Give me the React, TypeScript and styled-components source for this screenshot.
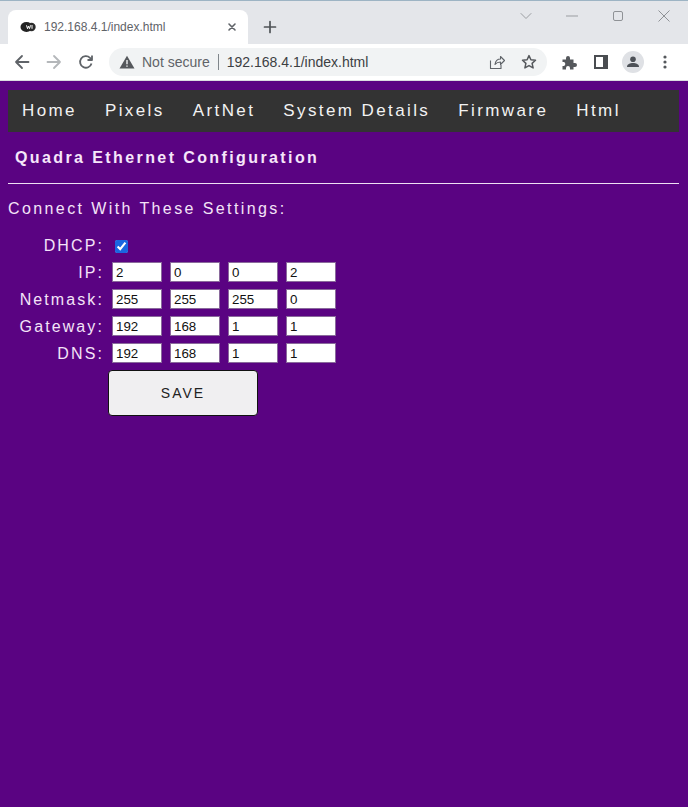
import React from "react";
import styled, { createGlobalStyle } from "styled-components";

const Global = createGlobalStyle`
  html, body { margin: 0; padding: 0; height: 100%; background: #5a0382; }
  #root { height: 100%; }
  * { box-sizing: border-box; }
`;

const Page = styled.div`
  width: 688px; height: 807px; display: flex; flex-direction: column; overflow: hidden;
  background: #5a0382; font-family: "Liberation Sans", Arial, sans-serif;
`;
const Chrome = styled.div`
  height: 81px; flex: none; display: flex; flex-direction: column;
  border-top: 1px solid #9db4c4; background: #e4e6ea;
  font-family: "Open Sans", "Liberation Sans", sans-serif;
`;
const TabStrip = styled.div`
  height: 43px; flex: none; display: flex; align-items: flex-end; padding-left: 8px;
`;
const Tab = styled.div`
  width: 240px; height: 34px; background: #fff; border-radius: 8px 8px 0 0;
  display: flex; align-items: center; padding: 0 11px 0 12px; gap: 8px;
  color: #5f6368; font-size: 12px; font-family: "Liberation Sans", sans-serif;
`;
const TabTitle = styled.span` flex: 1; letter-spacing: 0; `;
const NewTab = styled.div`
  width: 28px; height: 34px; margin-left: 8px; display: flex; align-items: center; justify-content: center;
`;
const WindowControls = styled.div`
  margin-left: auto; height: 43px; display: flex; align-items: flex-start; padding-top: 6px; padding-right: 1px;
`;
const WinBtn = styled.div<{ $w: number }>`
  width: ${(p) => p.$w}px; height: 18px; display: flex; align-items: center; justify-content: center;
`;
const Toolbar = styled.div`
  height: 37px; flex: none; background: #fff; display: flex; align-items: center; padding-left: 6px;
  border-bottom: 1px solid #dadce0;
`;
const NavIcon = styled.div`
  width: 32px; height: 28px; display: flex; align-items: center; justify-content: center;
`;
const Omnibox = styled.div`
  margin-left: 7px; width: 438px; height: 28px; border-radius: 14px; background: #f1f3f4;
  display: flex; align-items: center; padding-left: 10px; padding-right: 2px;
  font-family: "Liberation Sans", sans-serif; font-size: 14px;
`;
const NotSecure = styled.span` color: #5f6368; margin-left: 7px; `;
const Divider = styled.span` width: 1px; height: 16px; background: #80868b; margin: 0 8px 0 8px; `;
const Url = styled.span` color: #3c4043; flex: 1; `;
const OmniIcon = styled.div`
  width: 32px; height: 24px; display: flex; align-items: center; justify-content: center;
`;
const ToolIcons = styled.div` display: flex; align-items: center; margin-left: 6px; `;
const ToolIcon = styled.div`
  width: 32px; height: 28px; display: flex; align-items: center; justify-content: center;
`;
const Content = styled.main`
  flex: 1; padding: 9px 9px 0 8px; color: #f4e3f8;
  letter-spacing: 2.4px;
`;
const Nav = styled.nav`
  height: 42px; background: #333; display: flex; align-items: center; padding-left: 14px; gap: 28px;
`;
const NavLink = styled.span`
  color: #f2f2f2; font-size: 17px;
`;
const Title = styled.h1`
  margin: 17px 0 0 7px; font-size: 16px; line-height: 18px; font-weight: 700; color: #f6e6fa;
`;
const Rule = styled.hr`
  margin: 16px 0 0; border: 0; height: 1px; background: #efe0f4;
`;
const Lead = styled.p`
  margin: 16px 0 0; font-size: 16px; line-height: 18px; font-weight: 400;
`;
const Form = styled.form`
  margin-top: 17px; display: grid; grid-template-columns: 96px auto; row-gap: 5px; justify-content: start; column-gap: 8px;
`;
const Label = styled.label`
  font-size: 16px; line-height: 22px; text-align: right; white-space: nowrap; letter-spacing: 2.1px;
  justify-self: end;
`;
const Cells = styled.div`
  display: flex; gap: 8px; height: 22px; align-items: flex-start;
`;
const Check = styled.input`
  margin: 0 0 0 3px; width: 13px; height: 13px; accent-color: #1a66e0; align-self: center;
`;
const Octet = styled.input`
  width: 50px; height: 20px; border: 1px solid #8a6a9c; border-radius: 0; padding: 0 3px; margin: 0;
  background: #fff; color: #111; font: 13.33px "Liberation Sans", Arial, sans-serif; outline: none;
`;
const Save = styled.button`
  grid-column: 2; margin: 0 0 0 -4px; width: 150px; height: 46px; background: #f0eff1; border: 1px solid #111;
  border-radius: 4px; color: #222; font: 14px "Liberation Sans", Arial, sans-serif; letter-spacing: 2px;
`;

const stroke = { fill: "none", strokeLinecap: "round", strokeLinejoin: "round" } as const;

const rows = [
  { label: "IP:", values: ["2", "0", "0", "2"] },
  { label: "Netmask:", values: ["255", "255", "255", "0"] },
  { label: "Gateway:", values: ["192", "168", "1", "1"] },
  { label: "DNS:", values: ["192", "168", "1", "1"] },
];
const links = ["Home", "Pixels", "ArtNet", "System Details", "Firmware", "Html"];

export default function App() {
  return (
    <Page>
      <Global />
      <Chrome>
        <TabStrip>
          <Tab>
            <svg width="16" height="12" viewBox="0 0 16 12">
              <ellipse cx="6.5" cy="6" rx="6" ry="5" fill="#222" />
              <circle cx="11.5" cy="6" r="4.2" fill="#2b2b2b" />
              <path d="M6.5 4.3l1 3.4 1-2.6 1 2.6 1-3.4M12 4v3.8" stroke="#fff" strokeWidth="1" fill="none" />
            </svg>
            <TabTitle>192.168.4.1/index.html</TabTitle>
            <svg width="10" height="10" viewBox="0 0 10 10">
              <path d="M2 2l6 6M8 2l-6 6" stroke="#5f6368" strokeWidth="1.6" {...stroke} />
            </svg>
          </Tab>
          <NewTab>
            <svg width="14" height="14" viewBox="0 0 14 14">
              <path d="M7 1.5v11M1.5 7h11" stroke="#4f5357" strokeWidth="1.7" {...stroke} />
            </svg>
          </NewTab>
          <WindowControls>
            <WinBtn $w={46}>
              <svg width="12" height="8" viewBox="0 0 12 8"><path d="M1 1.5l5 5 5-5" stroke="#9a9da1" {...stroke} /></svg>
            </WinBtn>
            <WinBtn $w={46}>
              <svg width="12" height="2" viewBox="0 0 12 2"><path d="M0 1h12" stroke="#9a9da1" /></svg>
            </WinBtn>
            <WinBtn $w={46}>
              <svg width="10" height="10" viewBox="0 0 10 10"><rect x=".5" y=".5" width="9" height="9" rx="1.5" fill="none" stroke="#8f9296" /></svg>
            </WinBtn>
            <WinBtn $w={46}>
              <svg width="12" height="12" viewBox="0 0 12 12"><path d="M.5.5l11 11M11.5.5l-11 11" stroke="#8f9296" fill="none" /></svg>
            </WinBtn>
          </WindowControls>
        </TabStrip>
        <Toolbar>
          <NavIcon>
            <svg width="16" height="16" viewBox="0 0 16 16"><path d="M14.5 8H2M8 2L2 8l6 6" stroke="#5f6368" strokeWidth="1.8" {...stroke} /></svg>
          </NavIcon>
          <NavIcon>
            <svg width="16" height="16" viewBox="0 0 16 16"><path d="M1.5 8H14M8 2l6 6-6 6" stroke="#b4b7ba" strokeWidth="1.8" {...stroke} /></svg>
          </NavIcon>
          <NavIcon>
            <svg width="16" height="16" viewBox="0 0 16 16"><path d="M13.5 9.5A5.8 5.8 0 1 1 12 3.8L14 6M14 1.5V6H9.5" stroke="#5f6368" strokeWidth="1.8" fill="none" strokeLinejoin="round" /></svg>
          </NavIcon>
          <Omnibox>
            <svg width="16" height="14" viewBox="0 0 16 14">
              <path d="M8 .8L15.5 13.5H.5z" fill="#55585c" />
              <path d="M8 5v4.2M8 10.5v1.2" stroke="#f1f3f4" strokeWidth="1.4" />
            </svg>
            <NotSecure>Not secure</NotSecure>
            <Divider />
            <Url>192.168.4.1/index.html</Url>
            <OmniIcon>
              <svg width="16" height="16" viewBox="0 0 16 16">
                <path d="M1.5 6.5V14.5H12V11M6 10.5C6.5 7 9 5 11.5 5V2.5L15.5 6.5 11.5 10.5V8C9 8 7.3 8.8 6 10.5z" stroke="#5f6368" strokeWidth="1.1" fill="none" strokeLinejoin="round" />
              </svg>
            </OmniIcon>
            <OmniIcon>
              <svg width="16" height="16" viewBox="0 0 16 16">
                <path d="M8 1.6l1.9 4.2 4.6.5-3.4 3.1 1 4.5L8 11.6l-4.1 2.3 1-4.5L1.5 6.3l4.6-.5z" stroke="#55585c" strokeWidth="1.5" fill="none" strokeLinejoin="round" />
              </svg>
            </OmniIcon>
          </Omnibox>
          <ToolIcons>
            <ToolIcon>
              <svg width="16" height="16" viewBox="0 0 16 16">
                <path d="M1.5 5.5H5V4a2 2 0 0 1 4 0v1.5h3.5V9H14a2 2 0 0 1 0 4h-1.5v2.5H9V14a2 2 0 0 0-4 0v1.5H1.5V12H3a2.2 2.2 0 0 0 0-4H1.5z" fill="#55585c" />
              </svg>
            </ToolIcon>
            <ToolIcon>
              <svg width="14" height="14" viewBox="0 0 14 14">
                <rect x="1" y="1" width="12" height="12" fill="none" stroke="#4a4d51" strokeWidth="2" />
                <rect x="9" y="1" width="4" height="12" fill="#4a4d51" />
              </svg>
            </ToolIcon>
            <ToolIcon>
              <svg width="22" height="22" viewBox="0 0 22 22">
                <circle cx="11" cy="11" r="11" fill="#dfe1e5" />
                <circle cx="11" cy="8.2" r="2.8" fill="#4d5157" />
                <path d="M5 16c0-3 3-4 6-4s6 1 6 4z" fill="#4d5157" />
              </svg>
            </ToolIcon>
            <ToolIcon>
              <svg width="4" height="14" viewBox="0 0 4 14">
                <circle cx="2" cy="2" r="1.6" fill="#55585c" />
                <circle cx="2" cy="7" r="1.6" fill="#55585c" />
                <circle cx="2" cy="12" r="1.6" fill="#55585c" />
              </svg>
            </ToolIcon>
          </ToolIcons>
        </Toolbar>
      </Chrome>
      <Content>
        <Nav>
          {links.map((l) => <NavLink key={l}>{l}</NavLink>)}
        </Nav>
        <Title>Quadra Ethernet Configuration</Title>
        <Rule />
        <Lead>Connect With These Settings:</Lead>
        <Form>
          <Label>DHCP:</Label>
          <Cells><Check type="checkbox" defaultChecked /></Cells>
          {rows.map((r) => (
            <React.Fragment key={r.label}>
              <Label>{r.label}</Label>
              <Cells>
                {r.values.map((v, i) => <Octet key={i} defaultValue={v} />)}
              </Cells>
            </React.Fragment>
          ))}
          <Save type="button">SAVE</Save>
        </Form>
      </Content>
    </Page>
  );
}
